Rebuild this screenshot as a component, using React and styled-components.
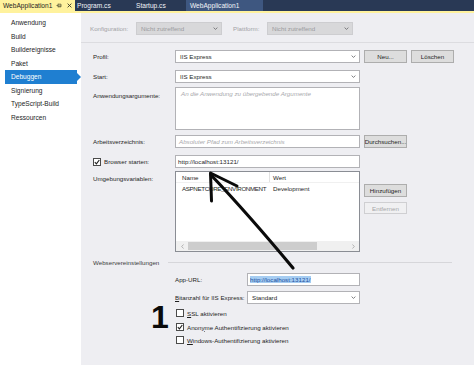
import React from 'react';
import styled, { createGlobalStyle } from 'styled-components';

const Global = createGlobalStyle`
  html, body { margin: 0; padding: 0; background: #ffffff; }
  body { font-family: "Liberation Sans", Arial, sans-serif; }
  * { box-sizing: border-box; }
`;

const Page = styled.div`
  position: relative;
  width: 474px;
  height: 367px;
  overflow: hidden;
  display: flex;
  flex-direction: column;
  background: #ffffff;
`;

const TabBar = styled.div`
  display: flex;
  height: 13px;
  flex-shrink: 0;
  background: #293955;
  border-bottom: 2px solid #fff29d;
`;

const Tab = styled.div`
  width: ${p => p.$w}px;
  padding-left: ${p => p.$pl}px;
  padding-right: 3px;
  display: flex;
  align-items: center;
  background: ${p => (p.$active ? '#fff29d' : p.$hover ? '#3e5780' : 'transparent')};
  color: ${p => (p.$active ? '#1e1e1e' : '#f2f4f8')};
  font-size: 6.6px;
  white-space: nowrap;
`;

const TabIcons = styled.div`
  margin-left: auto;
  display: flex;
  align-items: center;
  gap: 5px;
`;

const Body = styled.div`
  display: flex;
  height: 352px;
  flex-shrink: 0;
`;

const Nav = styled.div`
  width: 81px;
  flex-shrink: 0;
  background: #ffffff;
  padding-top: 3px;
  display: flex;
  flex-direction: column;
`;

const NavItem = styled.div`
  position: relative;
  margin-left: 5px;
  width: 72px;
  height: 13.5px;
  padding-left: 6px;
  display: flex;
  align-items: center;
  font-size: 6.6px;
  color: ${p => (p.$selected ? '#ffffff' : '#1e1e1e')};
  background: ${p => (p.$selected ? '#1f7fd1' : 'transparent')};
  &::after {
    content: '';
    display: ${p => (p.$selected ? 'block' : 'none')};
    position: absolute;
    right: -4px;
    top: 50%;
    transform: translateY(-50%);
    border-left: 4px solid #1f7fd1;
    border-top: 4px solid transparent;
    border-bottom: 4px solid transparent;
  }
`;

const Main = styled.div`
  flex: 1;
  background: #eeeef2;
  display: flex;
  flex-direction: column;
  font-size: 6.2px;
  color: #1e1e1e;
`;

const ConfigBar = styled.div`
  display: flex;
  align-items: center;
  padding: 9px 0 7px 9px;
  border-bottom: 1px solid #dcdce0;
`;

const ConfigLabel = styled.div`
  width: ${p => p.$w}px;
  margin-left: ${p => p.$ml || 0}px;
  color: #a2a2a6;
  font-size: 6.2px;
`;

const SelectBox = styled.div`
  width: ${p => p.$w}px;
  height: 13px;
  display: flex;
  align-items: center;
  justify-content: space-between;
  padding: 0 3px 0 4px;
  background: ${p => (p.$disabled ? '#d8d8da' : '#ffffff')};
  border: 1px solid ${p => (p.$disabled ? '#cdcdd0' : '#b2b2b6')};
  color: ${p => (p.$disabled ? '#9a9a9e' : '#1e1e1e')};
  font-size: 6.2px;
  white-space: nowrap;
`;

const TextBox = styled.div`
  width: ${p => p.$w}px;
  height: ${p => p.$h || 13}px;
  display: flex;
  align-items: ${p => (p.$multi ? 'flex-start' : 'center')};
  padding: ${p => (p.$multi ? '2px 4px' : '0 2px 0 2px')};
  background: #ffffff;
  border: 1px solid #b2b2b6;
  font-size: 6.2px;
  white-space: nowrap;
`;

const Placeholder = styled.span`
  color: #a8a8ac;
  font-style: italic;
  padding-left: 1px;
`;

const Selected = styled.span`
  background: #a6cdf2;
  color: #1d4f9e;
`;

const Form = styled.div`
  display: flex;
  flex-direction: column;
  padding-left: 12px;
`;

const Row = styled.div`
  display: flex;
  align-items: ${p => p.$align || 'center'};
  margin-top: ${p => p.$mt}px;
  padding-left: ${p => p.$indent || 0}px;
`;

const Label = styled.div`
  width: ${p => p.$w || 82}px;
  flex-shrink: 0;
  display: flex;
  align-items: center;
  padding-top: ${p => p.$pt || 0}px;
  white-space: nowrap;
`;

const Buttons = styled.div`
  display: flex;
  flex-direction: ${p => (p.$column ? 'column' : 'row')};
  gap: ${p => p.$gap || 4}px;
  margin-left: 4px;
  padding-top: ${p => p.$pt || 0}px;
`;

const Button = styled.div`
  width: 43px;
  height: ${p => p.$h || 13}px;
  display: flex;
  align-items: center;
  justify-content: center;
  background: ${p => (p.$disabled ? '#f0f0f2' : '#dddddd')};
  border: 1px solid ${p => (p.$disabled ? '#cfcfd2' : '#adadad')};
  color: ${p => (p.$disabled ? '#a6a6a8' : '#1e1e1e')};
  font-size: 6.2px;
  white-space: nowrap;
`;

const Check = styled.div`
  width: 8px;
  height: 8px;
  flex-shrink: 0;
  margin-right: ${p => p.$mr || 3}px;
  background: #ffffff;
  border: 1px solid #4a4a4a;
  display: flex;
  align-items: center;
  justify-content: center;
`;

const Table = styled.div`
  width: 185px;
  height: 81px;
  background: #ffffff;
  border: 1px solid #8a8d94;
  display: flex;
  flex-direction: column;
`;

const TableRow = styled.div`
  display: grid;
  grid-template-columns: 94px 1fr;
  height: 11px;
  border-bottom: ${p => (p.$header ? '1px solid #f0f0f0' : 'none')};
`;

const Cell = styled.div`
  display: flex;
  align-items: center;
  padding-left: ${p => p.$pl}px;
  border-right: ${p => (p.$divider ? '1px solid #e2e2e2' : 'none')};
  letter-spacing: ${p => p.$tight ? '-0.35px' : 'normal'};
  white-space: nowrap;
  font-size: 6.2px;
`;

const TableSpacer = styled.div`
  flex: 1;
`;

const ScrollBar = styled.div`
  height: 10px;
  display: flex;
  align-items: center;
  background: #f0f0f0;
`;

const ScrollArrow = styled.div`
  width: 12px;
  height: 10px;
  display: flex;
  align-items: center;
  justify-content: center;
`;

const ScrollThumb = styled.div`
  width: 129px;
  height: 8px;
  background: #cdcdcd;
`;

const ScrollTrack = styled.div`
  flex: 1;
`;

const SectionRow = styled.div`
  display: flex;
  align-items: center;
  height: 8px;
  margin-top: ${p => p.$mt}px;
`;

const SectionTitle = styled.div`
  width: 75px;
  color: #3c3c3c;
  white-space: nowrap;
`;

const SectionLine = styled.div`
  flex: 1;
  height: 1px;
  margin-right: 22px;
  background: #d6d6da;
`;

const CheckRow = styled.div`
  display: flex;
  align-items: center;
  height: 8px;
  margin-top: ${p => p.$mt}px;
  padding-left: 83px;
  white-space: nowrap;
`;

const Annotations = styled.svg`
  position: absolute;
  left: 0;
  top: 0;
  pointer-events: none;
`;

const HandOne = styled.div`
  position: absolute;
  left: 151px;
  top: 301px;
  font-family: "Liberation Sans", Arial, sans-serif;
  font-weight: bold;
  font-size: 32px;
  line-height: 1;
  color: #0a0a0a;
  pointer-events: none;
`;

const Chevron = () => (
  <svg width="5" height="3" viewBox="0 0 5 3">
    <path d="M0.6 0.6 L2.5 2.4 L4.4 0.6" fill="none" stroke="#707074" strokeWidth="0.9" />
  </svg>
);

const CheckMark = () => (
  <svg width="6" height="6" viewBox="0 0 6 6">
    <path d="M0.8 3.2 L2.4 4.8 L5.3 1" fill="none" stroke="#1e1e1e" strokeWidth="1.1" />
  </svg>
);

const Pin = () => (
  <svg width="6" height="5" viewBox="0 0 6 5">
    <path d="M0.5 2.5 H2 M2 0.8 V4.2 M2 1.2 H5 V3.8 H2 M2 3 H5" fill="none" stroke="#5a5a3a" strokeWidth="0.8" />
  </svg>
);

const Close = () => (
  <svg width="5" height="5" viewBox="0 0 5 5">
    <path d="M0.6 0.6 L4.4 4.4 M4.4 0.6 L0.6 4.4" fill="none" stroke="#3a3a2a" strokeWidth="0.9" />
  </svg>
);

const navItems = ['Anwendung', 'Build', 'Buildereignisse', 'Paket', 'Debuggen', 'Signierung', 'TypeScript-Build', 'Ressourcen'];

export default function App() {
  return (
    <>
      <Global />
      <Page>
        <TabBar>
          <Tab $w={75} $pl={3} $active>
            WebApplication1
            <TabIcons>
              <Pin />
              <Close />
            </TabIcons>
          </Tab>
          <Tab $w={58} $pl={2}>Program.cs</Tab>
          <Tab $w={53} $pl={3}>Startup.cs</Tab>
          <Tab $w={77} $pl={4} $hover>WebApplication1</Tab>
        </TabBar>
        <Body>
          <Nav>
            {navItems.map(n => (
              <NavItem key={n} $selected={n === 'Debuggen'}>{n}</NavItem>
            ))}
          </Nav>
          <Main>
            <ConfigBar>
              <ConfigLabel $w={46}>Konfiguration:</ConfigLabel>
              <SelectBox $w={86} $disabled>Nicht zutreffend<Chevron /></SelectBox>
              <ConfigLabel $w={34} $ml={11}>Plattform:</ConfigLabel>
              <SelectBox $w={86} $disabled>Nicht zutreffend<Chevron /></SelectBox>
            </ConfigBar>
            <Form>
              <Row $mt={7}>
                <Label>Profil:</Label>
                <SelectBox $w={185}>IIS Express<Chevron /></SelectBox>
                <Buttons>
                  <Button>Neu...</Button>
                  <Button>Löschen</Button>
                </Buttons>
              </Row>
              <Row $mt={7}>
                <Label>Start:</Label>
                <SelectBox $w={185}>IIS Express<Chevron /></SelectBox>
              </Row>
              <Row $mt={4} $align="flex-start">
                <Label $pt={5}>Anwendungsargumente:</Label>
                <TextBox $w={185} $h={43} $multi>
                  <Placeholder>An die Anwendung zu übergebende Argumente</Placeholder>
                </TextBox>
              </Row>
              <Row $mt={5}>
                <Label>Arbeitsverzeichnis:</Label>
                <TextBox $w={185}>
                  <Placeholder>Absoluter Pfad zum Arbeitsverzeichnis</Placeholder>
                </TextBox>
                <Buttons>
                  <Button>Durchsuchen...</Button>
                </Buttons>
              </Row>
              <Row $mt={7}>
                <Label>
                  <Check><CheckMark /></Check>
                  Browser starten:
                </Label>
                <TextBox $w={185}>http://localhost:13121/</TextBox>
              </Row>
              <Row $mt={3} $align="flex-start">
                <Label $pt={4}>Umgebungsvariablen:</Label>
                <Table>
                  <TableRow $header>
                    <Cell $pl={6} $divider>Name</Cell>
                    <Cell $pl={3}>Wert</Cell>
                  </TableRow>
                  <TableRow>
                    <Cell $pl={6} $tight>ASPNETCORE_ENVIRONMENT</Cell>
                    <Cell $pl={3}>Development</Cell>
                  </TableRow>
                  <TableSpacer />
                  <ScrollBar>
                    <ScrollArrow>
                      <svg width="3" height="5" viewBox="0 0 3 5"><path d="M2.5 0.5 L0.7 2.5 L2.5 4.5" fill="none" stroke="#9a9a9a" strokeWidth="0.7" /></svg>
                    </ScrollArrow>
                    <ScrollThumb />
                    <ScrollTrack />
                    <ScrollArrow>
                      <svg width="3" height="5" viewBox="0 0 3 5"><path d="M0.5 0.5 L2.3 2.5 L0.5 4.5" fill="none" stroke="#9a9a9a" strokeWidth="0.7" /></svg>
                    </ScrollArrow>
                  </ScrollBar>
                </Table>
                <Buttons $column $gap={5} $pt={13}>
                  <Button>Hinzufügen</Button>
                  <Button $disabled $h={12}>Entfernen</Button>
                </Buttons>
              </Row>
              <SectionRow $mt={6}>
                <SectionTitle>Webservereinstellungen</SectionTitle>
                <SectionLine />
              </SectionRow>
              <Row $mt={7} $indent={82}>
                <Label $w={72}>App-URL:</Label>
                <TextBox $w={113}><Selected>http://localhost:13121/</Selected></TextBox>
              </Row>
              <Row $mt={5} $indent={82}>
                <Label $w={72}><span><u>B</u>itanzahl für IIS Express:</span></Label>
                <SelectBox $w={113}>Standard<Chevron /></SelectBox>
              </Row>
              <CheckRow $mt={5}>
                <Check />
                <span><u>S</u>SL aktivieren</span>
              </CheckRow>
              <CheckRow $mt={6}>
                <Check><CheckMark /></Check>
                <span>Anon<u>y</u>me Authentifizierung aktivieren</span>
              </CheckRow>
              <CheckRow $mt={5}>
                <Check />
                <span><u>W</u>indows-Authentifizierung aktivieren</span>
              </CheckRow>
            </Form>
          </Main>
        </Body>
        <Annotations width="474" height="367" viewBox="0 0 474 367">
          <path d="M211 175 Q248 214 293 268" fill="none" stroke="#0a0a0a" strokeWidth="3.2" strokeLinecap="round" />
          <path d="M211.5 201 L210.5 173 L237 186" fill="none" stroke="#0a0a0a" strokeWidth="3" strokeLinecap="round" strokeLinejoin="round" />
        </Annotations>
        <HandOne>1</HandOne>
      </Page>
    </>
  );
}
